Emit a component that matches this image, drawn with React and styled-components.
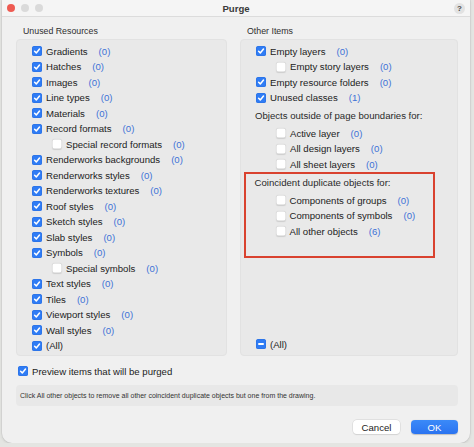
import React from 'react'
import styled, { createGlobalStyle } from 'styled-components'

const GlobalStyle = createGlobalStyle`
  html, body {
    margin: 0;
    padding: 0;
    background: #e4e5e2;
  }
  body {
    font-family: "Liberation Sans", Arial, sans-serif;
    -webkit-font-smoothing: antialiased;
  }
`

const unused = [
  { label: 'Gradients', count: 0 },
  { label: 'Hatches', count: 0 },
  { label: 'Images', count: 0 },
  { label: 'Line types', count: 0 },
  { label: 'Materials', count: 0 },
  { label: 'Record formats', count: 0 },
  { label: 'Special record formats', count: 0, sub: true, off: true },
  { label: 'Renderworks backgrounds', count: 0 },
  { label: 'Renderworks styles', count: 0 },
  { label: 'Renderworks textures', count: 0 },
  { label: 'Roof styles', count: 0 },
  { label: 'Sketch styles', count: 0 },
  { label: 'Slab styles', count: 0 },
  { label: 'Symbols', count: 0 },
  { label: 'Special symbols', count: 0, sub: true, off: true },
  { label: 'Text styles', count: 0 },
  { label: 'Tiles', count: 0 },
  { label: 'Viewport styles', count: 0 },
  { label: 'Wall styles', count: 0 },
  { label: '(All)' },
]

const Check = ({ state }) => (
  <Box $state={state}>
    {state === 'on' && (
      <svg width="8" height="8" viewBox="0 0 8 8">
        <path d="M1.6 4.2 L3.3 5.9 L6.5 2" fill="none" stroke="#fff" strokeWidth="1.5" strokeLinecap="round" strokeLinejoin="round" />
      </svg>
    )}
    {state === 'mixed' && <Dash />}
  </Box>
)

const Item = ({ label, count, indent, state }) => (
  <Row $indent={indent}>
    <Check state={state} />
    <Label>{label}</Label>
    {count !== undefined && <Count>({count})</Count>}
  </Row>
)

const App = () => {
  return (
    <>
      <GlobalStyle />
      <Window>
        <TitleBar>
          <Lights>
            <Light $color="#ee5b52" />
            <Light $color="#dadada" />
            <Light $color="#dadada" />
          </Lights>
          <Title>Purge</Title>
          <Help>?</Help>
        </TitleBar>
        <Content>
          <Columns>
            <Column>
              <GroupLabel>Unused Resources</GroupLabel>
              <Group>
                {unused.map((r) => (
                  <Item
                    key={r.label}
                    label={r.label}
                    count={r.count}
                    indent={r.sub ? 35 : 15}
                    state={r.off ? 'off' : 'on'}
                  />
                ))}
              </Group>
            </Column>
            <Column>
              <GroupLabel>Other Items</GroupLabel>
              <Group>
                <Item label="Empty layers" count={0} indent={15} state="on" />
                <Item label="Empty story layers" count={0} indent={35} state="off" />
                <Item label="Empty resource folders" count={0} indent={15} state="on" />
                <Item label="Unused classes" count={1} indent={15} state="on" />
                <Heading>Objects outside of page boundaries for:</Heading>
                <Item label="Active layer" count={0} indent={35} state="off" />
                <Item label="All design layers" count={0} indent={35} state="off" />
                <Item label="All sheet layers" count={0} indent={35} state="off" />
                <Highlight>
                  <HighlightHeading>Coincident duplicate objects for:</HighlightHeading>
                  <Item label="Components of groups" count={0} indent={29.5} state="off" />
                  <Item label="Components of symbols" count={0} indent={29.5} state="off" />
                  <Item label="All other objects" count={6} indent={29.5} state="off" />
                </Highlight>
                <Bottom>
                  <Item label="(All)" indent={15} state="mixed" />
                </Bottom>
              </Group>
            </Column>
          </Columns>
          <PreviewRow>
            <Check state="on" />
            <PreviewLabel>Preview items that will be purged</PreviewLabel>
          </PreviewRow>
          <Info>Click All other objects to remove all other coincident duplicate objects but one from the drawing.</Info>
          <Buttons>
            <Button>Cancel</Button>
            <Button $primary>OK</Button>
          </Buttons>
        </Content>
      </Window>
    </>
  )
}

const Window = styled.div`
  margin-left: 2px;
  width: 468px;
  height: 443px;
  background: #f0f0f0;
  border-radius: 0 0 10px 10px;
  box-shadow: 0 0 0 0.5px #c9c9c9, 0 1px 3px rgba(0, 0, 0, 0.12);
  overflow: hidden;
  display: flex;
  flex-direction: column;
`

const TitleBar = styled.div`
  height: 16px;
  flex-shrink: 0;
  display: flex;
  align-items: center;
  position: relative;
  background: #f5f5f5;
  border-bottom: 1px solid #dcdcdc;
`

const Lights = styled.div`
  display: flex;
  gap: 6px;
  padding-left: 5px;
`

const Light = styled.span`
  width: 8px;
  height: 8px;
  border-radius: 50%;
  background: ${(p) => p.$color};
`

const Title = styled.div`
  position: absolute;
  left: 0;
  right: 0;
  text-align: center;
  font-size: 9.6px;
  font-weight: bold;
  color: #3a3a3a;
  pointer-events: none;
`

const Help = styled.div`
  margin-left: auto;
  margin-right: 5px;
  width: 11px;
  height: 11px;
  border-radius: 50%;
  background: #e2e2e2;
  color: #4a4a4a;
  font-size: 8px;
  font-weight: bold;
  display: flex;
  align-items: center;
  justify-content: center;
`

const Content = styled.div`
  flex: 1;
  display: flex;
  flex-direction: column;
  padding: 0 12px 9px 14px;
`

const Columns = styled.div`
  display: grid;
  grid-template-columns: 211px 218px;
  column-gap: 13px;
`

const Column = styled.div`
  display: flex;
  flex-direction: column;
`

const GroupLabel = styled.div`
  height: 22px;
  box-sizing: border-box;
  padding: 8px 0 0 7px;
  font-size: 8.8px;
  line-height: 12px;
  color: #2e2e2e;
`

const Group = styled.div`
  height: 317px;
  box-sizing: border-box;
  padding: 3.5px 0 3.25px;
  background: #e9e9e9;
  border: 0.5px solid #e2e2e2;
  border-radius: 4px;
  display: flex;
  flex-direction: column;
`

const Row = styled.div`
  height: 15.5px;
  flex-shrink: 0;
  display: flex;
  align-items: center;
  padding-left: ${(p) => p.$indent}px;
  white-space: nowrap;
`

const Box = styled.span`
  width: 10px;
  height: 10px;
  flex-shrink: 0;
  box-sizing: border-box;
  border-radius: 2.5px;
  display: flex;
  align-items: center;
  justify-content: center;
  background: ${(p) => (p.$state === 'off' ? '#ffffff' : '#2f7cf5')};
  box-shadow: ${(p) =>
    p.$state === 'off'
      ? 'inset 0 0 0 0.5px #cfcfcf, 0 0.5px 1px rgba(0,0,0,0.12)'
      : 'inset 0 0 0 0.5px #2a6fe0'};
`

const Dash = styled.span`
  width: 6px;
  height: 1.6px;
  border-radius: 1px;
  background: #fff;
`

const Label = styled.span`
  margin-left: 4px;
  font-size: 9.6px;
  color: #222;
`

const Count = styled.span`
  margin-left: 11px;
  font-size: 9.6px;
  color: #3d72d7;
`

const Heading = styled.div`
  height: 20px;
  flex-shrink: 0;
  box-sizing: border-box;
  padding: 3.25px 0 0 14px;
  font-size: 9.6px;
  line-height: 13px;
  color: #2a2a2a;
  white-space: nowrap;
`

const Highlight = styled.div`
  margin: 0 22px 0 3px;
  border: 2.5px solid #d9422f;
  padding-bottom: 16.75px;
`

const HighlightHeading = styled.div`
  padding: 1.5px 0 3.75px 8.5px;
  font-size: 9.6px;
  line-height: 13px;
  color: #2a2a2a;
  white-space: nowrap;
`

const Bottom = styled.div`
  margin-top: auto;
`

const PreviewRow = styled.div`
  margin-top: 7.25px;
  height: 15.5px;
  display: flex;
  align-items: center;
  padding-left: 2px;
`

const PreviewLabel = styled.span`
  margin-left: 4px;
  font-size: 9.6px;
  color: #222;
`

const Info = styled.div`
  margin-top: 6.25px;
  height: 21px;
  box-sizing: border-box;
  padding-left: 4px;
  display: flex;
  align-items: center;
  background: #e8e8e8;
  border-radius: 4px;
  font-size: 7px;
  color: #333;
  white-space: nowrap;
`

const Buttons = styled.div`
  margin-top: 14px;
  display: flex;
  justify-content: flex-end;
  gap: 11px;
`

const Button = styled.div`
  width: 47px;
  height: 14px;
  border-radius: 4px;
  display: flex;
  align-items: center;
  justify-content: center;
  font-size: 9.6px;
  color: ${(p) => (p.$primary ? '#fff' : '#222')};
  background: ${(p) => (p.$primary ? 'linear-gradient(#3b8af8, #2a73f0)' : '#ffffff')};
  box-shadow: ${(p) =>
    p.$primary ? '0 0.5px 1px rgba(0,0,0,0.2)' : '0 0 0 0.5px #d4d4d4, 0 0.5px 1px rgba(0,0,0,0.12)'};
`

export default App
